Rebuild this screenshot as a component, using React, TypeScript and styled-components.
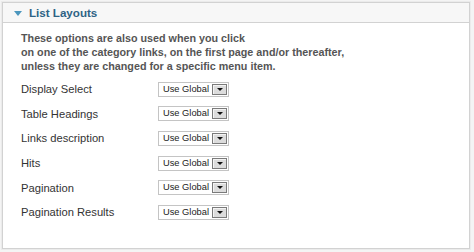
import React from "react";
import styled, { createGlobalStyle } from "styled-components";

const GlobalStyle = createGlobalStyle`
  html, body {
    margin: 0;
    padding: 0;
    background: #fff;
  }
  body {
    font-family: "Liberation Sans", Arial, sans-serif;
  }
`;

const Page = styled.div`
  width: 474px;
  height: 252px;
  padding: 2px 4px 3px 2px;
  box-sizing: border-box;
  background: #f4f4f4;
`;

const Panel = styled.section`
  height: 100%;
  box-sizing: border-box;
  border: 1px solid #d2d2d2;
  background: #fff;
  box-shadow: 0 0 0 1px #ebebeb;
`;

const Header = styled.h3`
  margin: 0;
  height: 19px;
  display: flex;
  align-items: center;
  gap: 7px;
  padding-left: 11px;
  background: #f7f7f7;
  border-bottom: 1px solid #d2d2d2;
  font-size: 11.6px;
  font-weight: bold;
  color: #2e6385;
`;

const Arrow = styled.span`
  width: 0;
  height: 0;
  border-left: 4px solid transparent;
  border-right: 4px solid transparent;
  border-top: 5px solid #4b96bd;
  margin-top: 1px;
`;

const Body = styled.div`
  padding: 8px 18px 0;
`;

const Intro = styled.p`
  margin: 0 0 4px;
  font-size: 10.75px;
  font-weight: bold;
  line-height: 14px;
  color: #555;
`;

const Row = styled.div`
  display: flex;
  align-items: center;
  height: 24.6px;
`;

const Label = styled.label`
  width: 137px;
  font-size: 11.2px;
  color: #333;
`;

const Select = styled.div`
  display: flex;
  align-items: stretch;
  width: 71px;
  height: 15px;
  box-sizing: border-box;
  padding: 1px;
  border: 1px solid #c4c4c4;
  background: #fff;
`;

const SelectText = styled.span`
  flex: 1;
  min-width: 0;
  overflow: hidden;
  white-space: nowrap;
  padding-left: 3px;
  font-size: 9.3px;
  line-height: 11px;
  color: #222;
`;

const SelectButton = styled.span`
  flex: 0 0 15px;
  box-sizing: border-box;
  display: flex;
  align-items: flex-end;
  justify-content: center;
  padding-bottom: 3px;
  background: #dcdcdc;
  border: 1px solid #7a7a7a;
  box-shadow: inset 1px 1px 0 #f4f4f4;

  &::after {
    content: "";
    width: 0;
    height: 0;
    border-left: 3px solid transparent;
    border-right: 3px solid transparent;
    border-top: 3px solid #111;
  }
`;

const options = [
  "Display Select",
  "Table Headings",
  "Links description",
  "Hits",
  "Pagination",
  "Pagination Results",
];

export default function App() {
  return (
    <>
      <GlobalStyle />
      <Page>
        <Panel>
          <Header>
            <Arrow />
            List Layouts
          </Header>
          <Body>
            <Intro>
              These options are also used when you click
              <br />
              on one of the category links, on the first page and/or thereafter,
              <br />
              unless they are changed for a specific menu item.
            </Intro>
            {options.map((o) => (
              <Row key={o}>
                <Label>{o}</Label>
                <Select>
                  <SelectText>Use Global</SelectText>
                  <SelectButton />
                </Select>
              </Row>
            ))}
          </Body>
        </Panel>
      </Page>
    </>
  );
}
